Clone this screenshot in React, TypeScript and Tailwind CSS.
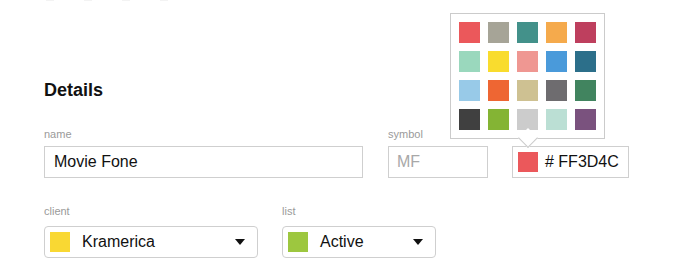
import React from "react";

const swatches = [
  "#EB585B", "#A6A497", "#43918A", "#F5AA4C", "#BE3F5E",
  "#9AD8BD", "#F9DC2E", "#EF9792", "#4A9ADA", "#2C6F8A",
  "#98CAE8", "#EE6633", "#CEC192", "#6E6C6F", "#41845F",
  "#404040", "#84B434", "#CCCCCC", "#BBDFD4", "#7A527E",
];

function Caret() {
  return (
    <svg width="10" height="6" viewBox="0 0 10 6" className="shrink-0">
      <polygon points="0,0 10,0 5,6" fill="#111" />
    </svg>
  );
}

function Label({ children }: { children?: React.ReactNode }) {
  return <div className="text-[11px] leading-[14px] text-[#9a9a9a]">{children}</div>;
}

export default function App() {
  return (
    <div
      className="w-[681px] h-[271px] bg-white overflow-hidden text-[#111]"
      style={{ fontFamily: '"Liberation Sans", Arial, sans-serif' }}
    >
      <div className="flex h-[1px] pl-[46px] gap-[30px]">
        <div className="w-[8px] bg-[#f3f3f3]" />
        <div className="w-[8px] bg-[#f3f3f3]" />
        <div className="w-[8px] bg-[#f3f3f3]" />
        <div className="w-[8px] bg-[#f3f3f3]" />
      </div>

      <div className="pl-[44px]">
        <h2 className="mt-[77px] text-[18px] leading-[24px] font-bold text-[#111]">Details</h2>

        <div className="mt-[25px] flex items-end">
          <div className="w-[319px]">
            <Label>name</Label>
            <div className="mt-[5px] h-[32px] border border-[#cfcfcf] flex items-center px-[9px] text-[16px]">
              Movie Fone
            </div>
          </div>
          <div className="ml-[25px] w-[100px]">
            <Label>symbol</Label>
            <div className="mt-[5px] h-[32px] border border-[#cfcfcf] flex items-center px-[8px] text-[16px] text-[#a8a8a8]">
              MF
            </div>
          </div>
          <div className="ml-[24px] w-[117px] relative">
            <div className="absolute bottom-full mb-[7px] left-[-62px] w-[155px] border border-[#cbcbcb] bg-white p-[8px]">
              <div className="grid grid-cols-5 gap-[8px]">
                {swatches.map((c, i) => (
                  <div key={i} className="w-[21px] h-[21px]" style={{ backgroundColor: c }} />
                ))}
              </div>
              <div className="absolute left-[70px] top-[117px] w-[14px] h-[14px] bg-white border-r border-b border-[#cbcbcb] rotate-45" />
            </div>
            <div className="h-[32px] border border-[#cfcfcf] flex items-center pl-[5px] text-[16px]">
              <div className="w-[20px] h-[20px] bg-[#EB585B]" />
              <span className="ml-[7px]"># FF3D4C</span>
            </div>
          </div>
        </div>

        <div className="mt-[26px] flex items-end">
          <div className="w-[214px]">
            <Label>client</Label>
            <div className="mt-[8px] h-[32px] border border-[#cfcfcf] rounded-[4px] flex items-center pl-[5px] pr-[12px] text-[16px]">
              <div className="w-[20px] h-[20px] bg-[#F9D833]" />
              <span className="ml-[12px] flex-1">Kramerica</span>
              <Caret />
            </div>
          </div>
          <div className="ml-[24px] w-[154px]">
            <Label>list</Label>
            <div className="mt-[8px] h-[32px] border border-[#cfcfcf] rounded-[4px] flex items-center pl-[5px] pr-[12px] text-[16px]">
              <div className="w-[20px] h-[20px] bg-[#9DC73F]" />
              <span className="ml-[12px] flex-1">Active</span>
              <Caret />
            </div>
          </div>
        </div>
      </div>
    </div>
  );
}
